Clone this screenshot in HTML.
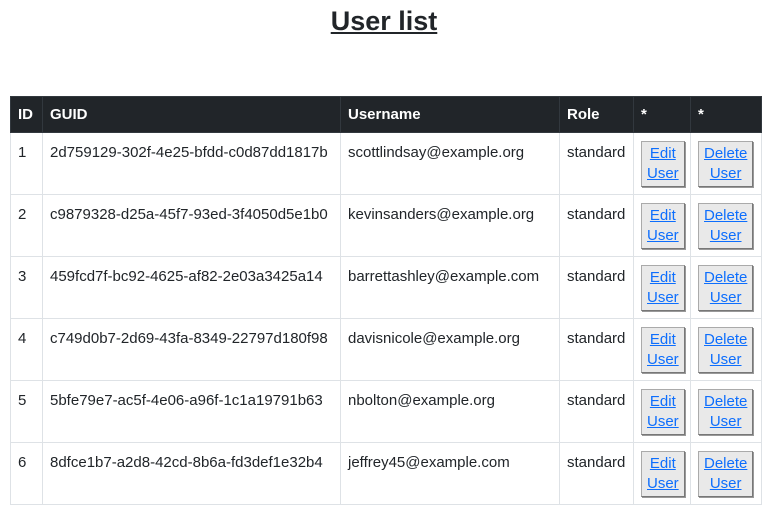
<!DOCTYPE html>
<html><head><style>
body{margin:0;width:768px;height:470px;overflow:hidden;background:#fff;font-family:"Liberation Sans",sans-serif;color:#212529;}
h1{margin:0;position:absolute;top:6px;left:0;width:768px;text-align:center;font-size:27px;font-weight:bold;text-decoration:underline;}
table{position:absolute;top:96px;left:10px;width:751px;table-layout:fixed;border-collapse:collapse;font-size:15px;}
th{background:#212529;color:#fff;text-align:left;height:36px;padding:0 7px;border:1px solid #32383e;font-weight:bold;box-sizing:border-box;}
td{height:62px;vertical-align:top;padding:11px 7px 0;border:1px solid #dee2e6;box-sizing:border-box;white-space:nowrap;}
.b{display:inline-block;background:#e9e9e9;border:1px solid #aaa;border-right-color:#777;border-bottom-color:#777;box-shadow:1px 1px 0 #999;text-align:center;color:#0d6efd;text-decoration:underline;line-height:20px;padding:2px 5px;margin-top:-3px;}
</style></head><body>
<h1>User list</h1>
<table>
<colgroup><col style="width:32px"><col style="width:298px"><col style="width:219px"><col style="width:74px"><col style="width:57px"><col style="width:71px"></colgroup>
<tr><th>ID</th><th>GUID</th><th>Username</th><th>Role</th><th>*</th><th>*</th></tr>
<tr><td>1</td><td>2d759129-302f-4e25-bfdd-c0d87dd1817b</td><td>scottlindsay@example.org</td><td>standard</td><td><span class="b">Edit<br>User</span></td><td><span class="b">Delete<br>User</span></td></tr>
<tr><td>2</td><td>c9879328-d25a-45f7-93ed-3f4050d5e1b0</td><td>kevinsanders@example.org</td><td>standard</td><td><span class="b">Edit<br>User</span></td><td><span class="b">Delete<br>User</span></td></tr>
<tr><td>3</td><td>459fcd7f-bc92-4625-af82-2e03a3425a14</td><td>barrettashley@example.com</td><td>standard</td><td><span class="b">Edit<br>User</span></td><td><span class="b">Delete<br>User</span></td></tr>
<tr><td>4</td><td>c749d0b7-2d69-43fa-8349-22797d180f98</td><td>davisnicole@example.org</td><td>standard</td><td><span class="b">Edit<br>User</span></td><td><span class="b">Delete<br>User</span></td></tr>
<tr><td>5</td><td>5bfe79e7-ac5f-4e06-a96f-1c1a19791b63</td><td>nbolton@example.org</td><td>standard</td><td><span class="b">Edit<br>User</span></td><td><span class="b">Delete<br>User</span></td></tr>
<tr><td>6</td><td>8dfce1b7-a2d8-42cd-8b6a-fd3def1e32b4</td><td>jeffrey45@example.com</td><td>standard</td><td><span class="b">Edit<br>User</span></td><td><span class="b">Delete<br>User</span></td></tr>
</table>
</body></html>
